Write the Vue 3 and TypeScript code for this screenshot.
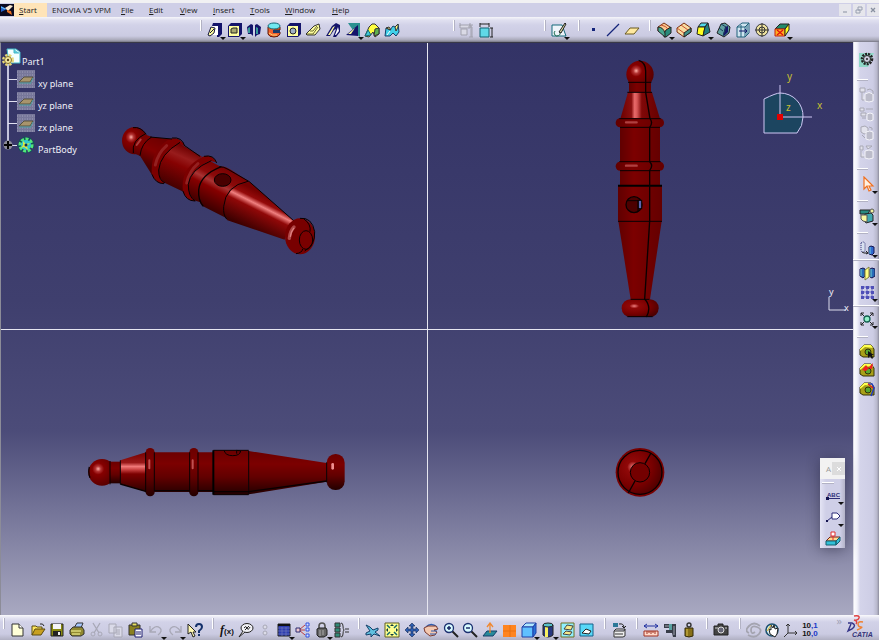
<script setup lang="ts">
interface Tool {
  icon: string
  label: string
  more?: boolean
  off?: boolean
}

interface Group {
  name: string
  tools: Tool[]
}

const t = (icon: string, label: string, flags = ''): Tool => ({
  icon,
  label,
  more: flags.includes('m'),
  off: flags.includes('d'),
})

const menus = ['Start', 'ENOVIA V5 VPM', 'File', 'Edit', 'View', 'Insert', 'Tools', 'Window', 'Help']

const topGroups: Group[] = [
  {
    name: 'features',
    tools: [
      t('pad', 'Pad', 'm'), t('pocket', 'Pocket', 'm'), t('shaft', 'Shaft'), t('groove', 'Groove'),
      t('hole', 'Hole'), t('rib', 'Rib'), t('slot', 'Slot'), t('stiffener', 'Stiffener', 'm'),
      t('loft', 'Multi-sections Solid'), t('unloft', 'Removed Multi-sections Solid'),
    ],
  },
  { name: 'constraints', tools: [t('dialog', 'Constraints in Dialog', 'd'), t('constraint', 'Constraint')] },
  { name: 'sketch', tools: [t('sketch', 'Sketch', 'm')] },
  { name: 'reference', tools: [t('point', 'Point'), t('line', 'Line'), t('plane', 'Plane')] },
  {
    name: 'dressup',
    tools: [
      t('fillet', 'Edge Fillet', 'm'), t('chamfer', 'Chamfer'), t('draft', 'Draft Angle', 'm'), t('shell', 'Shell'),
      t('thickness', 'Thickness'), t('thread', 'Thread'), t('removeface', 'Remove Face', 'm'),
    ],
  },
]

const sideGroups: Group[] = [
  { name: 'workbench', tools: [t('gear', 'Part Design')] },
  {
    name: 'insert',
    tools: [t('body1', 'Body', 'd'), t('body2', 'Geometrical Set', 'd'), t('body3', 'Ordered Set', 'd'), t('body4', 'Assemble', 'd')],
  },
  { name: 'select', tools: [t('cursor', 'Select', 'm')] },
  { name: 'surface', tools: [t('split', 'Split', 'm')] },
  { name: 'transform', tools: [t('translate', 'Translation', 'm')] },
  { name: 'mirror', tools: [t('mirror', 'Mirror'), t('pattern', 'Rectangular Pattern', 'm')] },
  { name: 'scale', tools: [t('scaling', 'Scaling', 'm')] },
  { name: 'analysis', tools: [t('an1', 'Draft Analysis'), t('an2', 'Curvature Analysis'), t('an3', 'Tap Analysis')] },
]

const bottomGroups: Group[] = [
  {
    name: 'standard',
    tools: [
      t('new', 'New'), t('open', 'Open'), t('save', 'Save'), t('print', 'Print'), t('cut', 'Cut', 'd'), t('copy', 'Copy', 'd'),
      t('paste', 'Paste'), t('undo', 'Undo', 'dm'), t('redo', 'Redo', 'dm'), t('help', "What's This?"),
    ],
  },
  {
    name: 'knowledge',
    tools: [
      t('fx', 'Formula'), t('comment', 'Comment'), t('link', 'Link', 'd'), t('table', 'Design Table', 'm'),
      t('relations', 'Relations'), t('lock', 'Lock', 'm'), t('equiv', 'Equivalent Dimensions'),
    ],
  },
  {
    name: 'view',
    tools: [
      t('fly', 'Fly Mode'), t('fit', 'Fit All In'), t('pan', 'Pan'), t('rotate', 'Rotate'), t('zoomin', 'Zoom In'), t('zoomout', 'Zoom Out'),
      t('normal', 'Normal View'), t('multi', 'Multi-View'), t('iso', 'Isometric View', 'm'), t('shade', 'Shading', 'm'),
      t('hide', 'Hide/Show'), t('swap', 'Swap Visible Space'),
    ],
  },
  { name: 'catalog', tools: [t('catalog', 'Catalog Browser')] },
  { name: 'measure', tools: [t('ruler', 'Measure Between'), t('caliper', 'Measure Item'), t('weight', 'Measure Inertia')] },
  { name: 'capture', tools: [t('camera', 'Capture')] },
  { name: 'tools', tools: [t('update', 'Update', 'd'), t('manual', 'Manual Update'), t('axes', 'Axis System'), t('mean', 'Mean Dimensions')] },
]

const planes = ['xy plane', 'yz plane', 'zx plane']
const annotations = [t('abc', 'Text with Leader', 'm'), t('flag', 'Flag Note', 'm'), t('stamp', 'Part Stamp')]
</script>

<template>
  <svg class="sprite" aria-hidden="true">
    <defs>
      <linearGradient id="barrelH" x1="0" x2="1" y1="0" y2="0">
        <stop offset="0" stop-color="#600000" /><stop offset=".35" stop-color="#7c0000" /><stop offset="1" stop-color="#640000" />
      </linearGradient>
      <linearGradient id="coneH" x1="0" x2="1" y1="0" y2="0">
        <stop offset="0" stop-color="#6c0000" /><stop offset=".28" stop-color="#8a1010" /><stop offset=".36" stop-color="#e86a6a" />
        <stop offset=".42" stop-color="#d85858" /><stop offset=".54" stop-color="#800808" /><stop offset="1" stop-color="#660000" />
      </linearGradient>
      <linearGradient id="barrelV" x1="0" x2="0" y1="0" y2="1">
        <stop offset="0" stop-color="#6a0000" /><stop offset=".3" stop-color="#7c0000" /><stop offset=".6" stop-color="#620000" /><stop offset="1" stop-color="#220000" />
      </linearGradient>
      <linearGradient id="coneV" x1="0" x2="0" y1="0" y2="1">
        <stop offset="0" stop-color="#760000" /><stop offset=".26" stop-color="#981818" /><stop offset=".36" stop-color="#f07878" />
        <stop offset=".44" stop-color="#c84040" /><stop offset=".55" stop-color="#7c0000" /><stop offset="1" stop-color="#2c0000" />
      </linearGradient>
      <linearGradient id="tiltHead" gradientUnits="userSpaceOnUse" x1="150" y1="66" x2="110" y2="150">
        <stop offset="0" stop-color="#6c0000" /><stop offset=".5" stop-color="#820000" /><stop offset="1" stop-color="#480000" />
      </linearGradient>
      <linearGradient id="tilt" gradientUnits="userSpaceOnUse" x1="240" y1="100" x2="186" y2="220">
        <stop offset="0" stop-color="#6c0000" /><stop offset=".25" stop-color="#981c1c" /><stop offset=".45" stop-color="#860202" /><stop offset="1" stop-color="#400000" />
      </linearGradient>
      <linearGradient id="tiltBlock" gradientUnits="userSpaceOnUse" x1="370" y1="165" x2="305" y2="290">
        <stop offset="0" stop-color="#740000" /><stop offset=".3" stop-color="#8c0a0a" /><stop offset=".42" stop-color="#a83434" />
        <stop offset=".55" stop-color="#860000" /><stop offset="1" stop-color="#380000" />
      </linearGradient>
      <linearGradient id="tiltCone" gradientUnits="userSpaceOnUse" x1="485" y1="250" x2="435" y2="350">
        <stop offset="0" stop-color="#740000" /><stop offset=".2" stop-color="#940a0a" /><stop offset=".32" stop-color="#f08080" />
        <stop offset=".46" stop-color="#900808" /><stop offset="1" stop-color="#3c0000" />
      </linearGradient>
      <radialGradient id="ball" cx=".36" cy=".37" r=".72">
        <stop offset="0" stop-color="#ffb0a8" /><stop offset=".14" stop-color="#b43434" /><stop offset=".3" stop-color="#860000" /><stop offset="1" stop-color="#520000" />
      </radialGradient>
      <radialGradient id="foot" cx=".34" cy=".38" r=".72">
        <stop offset="0" stop-color="#f08080" /><stop offset=".18" stop-color="#900808" /><stop offset=".6" stop-color="#780000" /><stop offset="1" stop-color="#4c0000" />
      </radialGradient>
    </defs>

    <!-- part features -->
    <symbol id="pad" viewBox="0 0 16 16"><path d="M6 1h9v11l-3 3h-2V4H5z" fill="#14146a" /><path d="M4 4h7v9H4z" fill="#fff" /><path d="M1 13l3-8 4 1-1 5-4 3z" fill="#ffffa0" stroke="#14143a" /><path d="M3 11l4-4" stroke="#14143a" /></symbol>
    <symbol id="pocket" viewBox="0 0 16 16"><path d="M4 1h11v11l-3 3H1V4z" fill="#14146a" /><path d="M2 4h10v10H2z" fill="#ffffa0" /><path d="M4 11V7l2-1h4v5z" fill="#a8a870" stroke="#222" /></symbol>
    <symbol id="shaft" viewBox="0 0 16 16"><path d="M1 5l4-3 2 1v11l-2-2H2zM15 5l-4-3-2 1v12l2-2 3-1z" fill="#14146a" /><path d="M2 6l2-1v6H2zM10 5l2 1v6h-2z" fill="#3a9a9a" /></symbol>
    <symbol id="groove" viewBox="0 0 16 16"><path d="M2 5v7q1 3 6 3t6-3v-2H8V8h6V5z" fill="#f06030" stroke="#5a1a08" /><ellipse cx="8" cy="4" rx="6" ry="3" fill="#70e8f0" stroke="#146a7a" /><path d="M7 8h7v3H7z" fill="#1a3a6a" /><path d="M3 11q3 3 8 2" stroke="#ffe070" fill="none" /></symbol>
    <symbol id="hole" viewBox="0 0 16 16"><path d="M4 1h11v11l-3 3H1V4z" fill="#14146a" /><path d="M2 4h10v10H2z" fill="#ffffa0" /><circle cx="7" cy="9" r="3" fill="#a0b0c8" stroke="#222" /></symbol>
    <symbol id="rib" viewBox="0 0 16 16"><path d="M1 12L9 4l5-2 1 5-5 6H2z" fill="#ffffa0" stroke="#333" /><path d="M2 12h6l5-7M5 9h3l4-5" stroke="#6a6a30" fill="none" /></symbol>
    <symbol id="slot" viewBox="0 0 16 16"><path d="M1 14L7 4l4-3 4 2v7l-4 5H8l3-8-2 1-4 6z" fill="#14146a" /><path d="M3 13l5-8 2-1-5 9z" fill="#ffffa0" /><path d="M10 13l3-8 1 4-3 4z" fill="#fff" /></symbol>
    <symbol id="stiffener" viewBox="0 0 16 16"><path d="M3 1h12v14l-5-4-5-7z" fill="#2a9090" /><path d="M1 13L13 3v11z" fill="#14146a" /><path d="M3 12l7-6-4 6z" fill="#ffffa0" /></symbol>
    <symbol id="loft" viewBox="0 0 16 16"><path d="M1 14l4-9 3-3h3l4 4v6l-4 3-2-5-4 5z" fill="#ffff40" stroke="#333" /><path d="M1 14l3-6 3 5z" fill="#40c8d8" stroke="#146a7a" /><path d="M10 14l1-7 4-1v6z" fill="#60b050" stroke="#333" /></symbol>
    <symbol id="unloft" viewBox="0 0 16 16"><path d="M1 14l1-8 4 2 3-4 2 1 3-3 1 8-3 4-3-3-3 3z" fill="#40d0e8" stroke="#14406a" /><path d="M2 6l3-1 2 3zM11 5l3-3v3l-2 4z" fill="#ffff80" stroke="#333" /><path d="M3 13l3-4" stroke="#fff" /></symbol>
    <symbol id="dialog" viewBox="0 0 16 16"><path d="M1 3h10v3H1zM2 7h6v6H2z" fill="#dadae6" stroke="#a2a2ae" /><path d="M9 5h4v10M12 3v12M10 15h4M10 3h4M1 1v3M11 1v3" stroke="#a2a2ae" fill="none" /></symbol>
    <symbol id="constraint" viewBox="0 0 16 16"><path d="M2 6h9v9H2z" fill="#60d8e8" stroke="#146070" /><path d="M2 1v4M11 1v4M2 2h9M12 6h3M12 15h3M14 6v9" stroke="#222" fill="none" /></symbol>
    <symbol id="sketch" viewBox="0 0 16 16"><path d="M1 3h10l4 11H1z" fill="#eef4fa" stroke="#146a7a" /><path d="M4 9a3 3 0 1 0 5 1" fill="none" stroke="#207050" /><path d="M8 10L14 1l1 1-5 9z" fill="#d8d8a0" stroke="#222" /></symbol>
    <symbol id="point" viewBox="0 0 16 16"><path d="M7 6h3v3H7z" fill="#14247a" /></symbol>
    <symbol id="line" viewBox="0 0 16 16"><path d="M2 14L14 2" stroke="#14247a" stroke-width="1.3" /></symbol>
    <symbol id="plane" viewBox="0 0 16 16"><path d="M1 12l5-6h9l-5 6z" fill="#ffe9a0" stroke="#6a5a20" /></symbol>
    <symbol id="fillet" viewBox="0 0 16 16"><path d="M2 5l6-4 6 4v6l-5 4q0-5-3-6L2 9z" fill="#f8c890" stroke="#7a3010" /><path d="M8 15q0-5 2-7l5-3v6l-5 4z" fill="#2a8a7a" stroke="#222" /><path d="M2 9V5q5 0 7 6v4z" fill="#4aa890" stroke="#222" /><path d="M5 3q5 1 7 4" stroke="#c85030" fill="none" /></symbol>
    <symbol id="chamfer" viewBox="0 0 16 16"><path d="M1 6l7-5 7 5v4l-7 5-7-5z" fill="#f8dca0" stroke="#7a3010" /><path d="M8 11l7-5v4l-7 5z" fill="#40908a" stroke="#222" /><path d="M1 6l7 5M5 3l7 5" stroke="#c85030" /></symbol>
    <symbol id="draft" viewBox="0 0 16 16"><path d="M3 5l3-4h7l-3 4z" fill="#50d8e8" stroke="#222" /><path d="M3 5h7l-2 9-6-2z" fill="#ffff20" stroke="#222" /><path d="M10 5l3-4 2 9-7 4z" fill="#208080" stroke="#222" /></symbol>
    <symbol id="shell" viewBox="0 0 16 16"><path d="M2 11l4-9 4-1 5 4-1 6-5 4z" fill="#60a0a0" stroke="#222" /><path d="M8 13l2-8 3-1v6l-4 4z" fill="#14146a" /><path d="M6 2l5 3-3 9M4 6l4 3" stroke="#1a3a5a" fill="none" /></symbol>
    <symbol id="thickness" viewBox="0 0 16 16"><path d="M2 5l5-4h7v10l-4 4H2z" fill="#cfe4f0" stroke="#20607a" /><path d="M10 5v10M2 5h8l4-4M6 3v12M12 3v10" stroke="#20607a" fill="none" /><path d="M4 9h8m-2-2l2 2-2 2" stroke="#14146a" fill="none" /></symbol>
    <symbol id="thread" viewBox="0 0 16 16"><circle cx="8" cy="8" r="6" fill="#f0e4a0" stroke="#333" /><circle cx="8" cy="8" r="3" fill="none" stroke="#333" /><path d="M8 1v14M1 8h14" stroke="#333" /></symbol>
    <symbol id="removeface" viewBox="0 0 16 16"><path d="M1 7l5-5h9l-4 5z" fill="#208a6a" stroke="#222" /><path d="M1 7h10v7H1z" fill="#ffb020" stroke="#c02010" /><path d="M11 7l4-5v6l-4 6z" fill="#ffff20" stroke="#222" /><path d="M3 8l6 5M9 8l-6 5" stroke="#e01010" stroke-width="1.3" /></symbol>

    <!-- side bar -->
    <symbol id="gear" viewBox="0 0 16 16"><path d="M0 1h15l-6 14H0z" fill="#90d8c8" /><circle cx="8" cy="7" r="5" fill="none" stroke="#222" stroke-width="2.6" stroke-dasharray="2 1" /><circle cx="8" cy="7" r="3.5" fill="#ccd" stroke="#222" /><circle cx="8" cy="7" r="1" fill="#222" /></symbol>
    <symbol id="body1" viewBox="0 0 16 16"><path d="M1 1h5v4H1zM3 5v8h3" fill="#e2e2ec" stroke="#a8a8b4" /><path d="M6 7q4-3 8 0v7q-4 2-8 0z" fill="#bcbcca" stroke="#f4f4fa" /><path d="M8 3l3-1 3 2v3" fill="none" stroke="#a8a8b4" /></symbol>
    <symbol id="body2" viewBox="0 0 16 16"><path d="M1 2h4v3H1zM7 3h7M2 7h5v3H2zM3 12h4" fill="#e2e2ec" stroke="#a8a8b4" /><path d="M8 8q3-2 6 0v6q-3 2-6 0z" fill="#bcbcca" stroke="#f4f4fa" /></symbol>
    <symbol id="body3" viewBox="0 0 16 16"><path d="M2 2l4-1 3 2v5l-4 1-3-2z" fill="#e2e2ec" stroke="#a8a8b4" /><path d="M7 7q4-2 7 0v7q-4 2-7 0z" fill="#bcbcca" stroke="#f4f4fa" /><path d="M10 2l3 1v2M3 10l3 3" stroke="#a8a8b4" fill="none" /></symbol>
    <symbol id="body4" viewBox="0 0 16 16"><path d="M1 2h3v4H1zM2 7v6h4M7 2l2 3 4-3z" fill="#e2e2ec" stroke="#a8a8b4" /><path d="M6 7q4-2 8 0v7q-4 2-8 0z" fill="#bcbcca" stroke="#f4f4fa" /></symbol>
    <symbol id="cursor" viewBox="0 0 16 16"><path d="M5 1v12l3-3 2 5 2-1-2-4h4z" fill="#fff0e0" stroke="#f07020" stroke-width="1.2" /></symbol>
    <symbol id="split" viewBox="0 0 16 16"><path d="M1 2h10l-2 4H1z" fill="#2a8a80" stroke="#222" /><path d="M6 6l6-1 2 2v6l-7 2-2-3z" fill="#40a8b0" stroke="#222" /><path d="M2 7h6v7l-4-1-2-2z" fill="#f8f8a0" stroke="#555" /><circle cx="13" cy="3" r="2" fill="#f4f4a0" stroke="#555" /></symbol>
    <symbol id="translate" viewBox="0 0 16 16"><path d="M2 3q2-2 4 0v8q-2 2-4 0z" fill="#d8e0f0" stroke="#303078" stroke-dasharray="1 1" /><path d="M3 12l2 1h4m-2-2l2 2-2 1" stroke="#222" fill="none" /><path d="M10 7l2-1 3 1v6l-2 2-3-1z" fill="#306ad0" stroke="#141450" /><path d="M11 7v7" stroke="#70d0e0" /></symbol>
    <symbol id="mirror" viewBox="0 0 16 16"><path d="M1 4l3-1 2 1v7l-2 2-3-2zM11 4l2-1 3 1v7l-3 2-2-1z" fill="#286ab8" stroke="#141450" /><path d="M2 4v7M12 4v8" stroke="#70d8d8" /><path d="M6 5l4-3v10l-4 3z" fill="#ffff80" stroke="#808040" /></symbol>
    <symbol id="pattern" viewBox="0 0 16 16"><path d="M3 2v12M8 2v12M13 2v12M2 3h12M2 8h12M2 13h12" stroke="#6868c0" fill="none" /><path d="M2 2h3v3H2zM7 2h3v3H7zM12 2h3v3h-3zM2 7h3v3H2zM7 7h3v3H7zM12 7h3v3h-3zM2 12h3v3H2zM7 12h3v3H7zM12 12h3v3h-3z" fill="#5050b8" /></symbol>
    <symbol id="scaling" viewBox="0 0 16 16"><circle cx="8" cy="8" r="3" fill="#90f0c8" stroke="#146050" stroke-width="1.3" /><path d="M2 5V2h3M11 2h3v3M14 11v3h-3M5 14H2v-3M2 2l3 3M14 2l-3 3M14 14l-3-3M2 14l3-3" stroke="#222" fill="none" /></symbol>
    <symbol id="block" viewBox="0 0 16 16"><path d="M1 6l4-4h7l3 4v8H4l-3-2z" fill="#a8a018" stroke="#333008" /><path d="M1 6l4-4h7l2 3-8-1-5 4z" fill="#ffff50" /><circle cx="9" cy="9" r="3" fill="#58a830" stroke="#333008" /></symbol>
    <symbol id="an1" viewBox="0 0 16 16"><use href="#block" /><path d="M9 8v7l2-2 2 3 1-1-1-3h2z" fill="#111" /></symbol>
    <symbol id="an2" viewBox="0 0 16 16"><use href="#block" /><path d="M3 8l4-5 2 3 5-5-1 6-3-1-3 3z" fill="#f02020" /></symbol>
    <symbol id="an3" viewBox="0 0 16 16"><use href="#block" /><path d="M9 3h4l2 4-3 8" stroke="#2038c0" stroke-width="1.5" fill="none" /><path d="M9 3l5 4" stroke="#e02020" stroke-width="1.5" /></symbol>

    <!-- bottom bar -->
    <symbol id="new" viewBox="0 0 16 16"><path d="M2 2h7l4 4v8H2z" fill="#ffffd8" stroke="#333" /><path d="M9 2v4h4" fill="#fff" stroke="#333" /></symbol>
    <symbol id="open" viewBox="0 0 16 16"><path d="M2 13V4h4l1 1h5v3" fill="#ffe860" stroke="#5a4a10" /><path d="M2 13l3-6h10l-4 6z" fill="#c8a020" stroke="#5a4a10" /><path d="M10 2q3-1 4 2" stroke="#222" fill="none" /></symbol>
    <symbol id="save" viewBox="0 0 16 16"><path d="M2 2h12v12H2z" fill="#8a8a10" stroke="#222" /><path d="M4 2h8v5H4z" fill="#f4f4f8" /><path d="M4 9h8v5H4z" fill="#222" /><path d="M9 10h2v3H9z" fill="#eee" /></symbol>
    <symbol id="print" viewBox="0 0 16 16"><path d="M5 6l3-5h6l-2 5z" fill="#a8c8ff" stroke="#333" /><path d="M1 8l3-3h9l2 3v4l-3 2H3l-2-2z" fill="#908830" stroke="#333" /><path d="M2 9h10M3 12h8" stroke="#ffffa0" /></symbol>
    <symbol id="cut" viewBox="0 0 16 16"><path d="M4 1l6 10M11 1L5 11" stroke="#a8a8b6" stroke-width="1.3" /><circle cx="4" cy="12" r="2" fill="none" stroke="#a8a8b6" /><circle cx="11" cy="12" r="2" fill="none" stroke="#a8a8b6" /></symbol>
    <symbol id="copy" viewBox="0 0 16 16"><path d="M1 2h7v9H1zM6 5h8v10H6zM8 8h4M8 10h4M8 12h4" fill="#dadae8" stroke="#a8a8b6" /></symbol>
    <symbol id="paste" viewBox="0 0 16 16"><path d="M1 3h11v10H1z" fill="#8a8020" stroke="#333" /><path d="M4 1h5v3H4z" fill="#e8e060" stroke="#333" /><path d="M7 7h7v8H7z" fill="#fff" stroke="#1c1c70" /><path d="M8 10h5M8 12h5" stroke="#1c1c70" /></symbol>
    <symbol id="undo" viewBox="0 0 16 16"><path d="M2 4v6h6M2 10q5-8 10-4 3 3-2 7" fill="none" stroke="#a8a8b6" stroke-width="1.3" /></symbol>
    <symbol id="redo" viewBox="0 0 16 16"><path d="M14 4v6H8M14 10Q9 2 4 6q-3 3 2 7" fill="none" stroke="#a8a8b6" stroke-width="1.3" /></symbol>
    <symbol id="help" viewBox="0 0 16 16"><path d="M1 2v10l3-2 2 5 2-1-2-4h3z" fill="#fff8b0" stroke="#222" /><path d="M9 5q0-3 3-3t3 3q0 2-3 4v2" fill="none" stroke="#14306a" stroke-width="2" /><path d="M11 12h2v2h-2z" fill="#14306a" /></symbol>
    <symbol id="comment" viewBox="0 0 16 16"><ellipse cx="9" cy="6" rx="6" ry="4.5" fill="#f0f0f4" stroke="#222" /><path d="M5 9l-4 6 6-5" fill="#fff" stroke="#222" /><path d="M6 6q2-3 3 0t3-1M7 8l4-4" stroke="#222" fill="none" /></symbol>
    <symbol id="link" viewBox="0 0 16 16"><circle cx="8" cy="5" r="2" fill="#dcdce8" stroke="#a8a8b6" /><circle cx="8" cy="11" r="2" fill="#dcdce8" stroke="#a8a8b6" /></symbol>
    <symbol id="table" viewBox="0 0 16 16"><path d="M2 2h12v12H2z" fill="#2c3cb0" stroke="#222" /><path d="M2 6h12M2 9h12M2 12h12M6 5v9M10 5v9" stroke="#7880c0" stroke-width=".6" /><path d="M2 2h12v2H2z" fill="#111" /></symbol>
    <symbol id="relations" viewBox="0 0 16 16"><path d="M4 8l6-5M4 8l6 5M4 8h6" stroke="#c04040" fill="none" /><path d="M1 6h4v4H1z" fill="#f0c8d0" stroke="#2c2c70" /><path d="M11 1h3v3h-3zM11 6h3v3h-3zM11 12h3v3h-3z" fill="#d8e4ff" stroke="#3050e0" /></symbol>
    <symbol id="lock" viewBox="0 0 16 16"><path d="M5 7V4q0-3 3-3t3 3v3" fill="none" stroke="#555" stroke-width="1.6" /><path d="M3 7l2-1h7l1 2v5l-3 2H5l-2-2z" fill="#666" stroke="#222" /><path d="M6 8v6M9 8v5" stroke="#aaa" /></symbol>
    <symbol id="equiv" viewBox="0 0 16 16"><path d="M2 1h5v4H2zM2 6h5v4H2zM2 11h5v4H2z" fill="#308a78" stroke="#333" /><path d="M8 1q2 0 2 3t1 4q-1 1-1 4t-2 3M12 7h4M12 10h4" stroke="#333" fill="none" /></symbol>
    <symbol id="fly" viewBox="0 0 16 16"><path d="M1 3l4 2 3 3 5-2v2l-3 2 5 4-6-2-3 3v-3l-5 1v-2l4-2z" fill="#60c0e0" stroke="#14406a" /></symbol>
    <symbol id="fit" viewBox="0 0 16 16"><path d="M1 1h14v14H1z" fill="#ffff90" stroke="#606020" /><path d="M3 3l3 3M13 3l-3 3M3 13l3-3M13 13l-3-3" stroke="#146a6a" stroke-width="1.5" /><path d="M8 2l2 2H6zM8 14l2-2H6zM2 8l2 2V6zM14 8l-2 2V6z" fill="#103a3a" /></symbol>
    <symbol id="pan" viewBox="0 0 16 16"><path d="M8 1l3 3H9v3h3V5l3 3-3 3V9H9v3h2l-3 3-3-3h2V9H4v2L1 8l3-3v2h3V4H5z" fill="#2c5cb0" stroke="#142850" stroke-width=".6" /></symbol>
    <symbol id="rotate" viewBox="0 0 16 16"><path d="M3 5q5-5 11 0" stroke="#2c5cb0" stroke-width="1.6" fill="none" /><path d="M1 6l4-2h8l2 3-4 1 3 2-2 3-5 1-5-4z" fill="#f4c8b0" stroke="#7a3a30" /><path d="M8 9h6M7 12h6" stroke="#2c5cb0" stroke-width="1.2" fill="none" /></symbol>
    <symbol id="zoomin" viewBox="0 0 16 16"><path d="M9 9l6 6" stroke="#222" stroke-width="2" /><circle cx="6" cy="6" r="4.5" fill="#d8fbff" stroke="#1c3070" stroke-width="1.3" /><path d="M4 6h4M6 4v4" stroke="#142060" stroke-width="1.4" /></symbol>
    <symbol id="zoomout" viewBox="0 0 16 16"><path d="M9 9l6 6" stroke="#222" stroke-width="2" /><circle cx="6" cy="6" r="4.5" fill="#d8fbff" stroke="#1c3070" stroke-width="1.3" /><path d="M4 6h4" stroke="#142060" stroke-width="1.4" /></symbol>
    <symbol id="normal" viewBox="0 0 16 16"><path d="M1 14l4-5h10l-4 5z" fill="#288a9a" stroke="#14406a" /><path d="M8 11V2M5 5l3-4 3 4" stroke="#f08830" stroke-width="1.3" fill="none" /></symbol>
    <symbol id="multi" viewBox="0 0 16 16"><path d="M2 3h13v12H2z" fill="#ff8420" /><path d="M9 3v12M2 9h13" stroke="#e87010" /></symbol>
    <symbol id="iso" viewBox="0 0 16 16"><path d="M1 5l4-4h10l-3 4z" fill="#b0e8ff" stroke="#2040a8" /><path d="M1 5h11v10H1z" fill="#60c0ff" stroke="#2040a8" /><path d="M12 5l3-4v10l-3 4z" fill="#2870d8" stroke="#2040a8" /></symbol>
    <symbol id="shade" viewBox="0 0 16 16"><path d="M3 3v10q2 2 5 2t5-2V3z" fill="#283880" stroke="#222" /><path d="M5 4h3v11H5z" fill="#f8f060" /><ellipse cx="8" cy="3" rx="5" ry="2" fill="#58c0c8" stroke="#222" /></symbol>
    <symbol id="hide" viewBox="0 0 16 16"><path d="M1 1h13v14H1z" fill="#90f0ff" stroke="#707020" /><path d="M4 7l3-4 6 1-2 4zM3 12l3-3 6 1-2 3z" fill="#f4e88a" stroke="#444" /></symbol>
    <symbol id="swap" viewBox="0 0 16 16"><path d="M1 2h13v12H1z" fill="#58d8f8" stroke="#14608a" /><path d="M3 11l4-4 5 2-2 3z" fill="#fff" stroke="#222" /></symbol>
    <symbol id="catalog" viewBox="0 0 16 16"><path d="M3 9l2-2h9v7l-2 1H3zM3 9h10l1-2M4 12h8" fill="#eee" stroke="#333" /><path d="M2 1h5v4H2z" fill="#2c7898" /><path d="M8 2q5-1 5 4m-2-2l2 2 2-2" fill="none" stroke="#222" /></symbol>
    <symbol id="ruler" viewBox="0 0 16 16"><path d="M1 4h14M4 2L1 4l3 2M12 2l3 2-3 2" stroke="#2030a0" fill="none" /><path d="M1 9h14v5H1z" fill="#ffd8c8" stroke="#a03020" /><path d="M4 9v3M6 9v2M8 9v3M10 9v2M12 9v3" stroke="#a03020" /></symbol>
    <symbol id="caliper" viewBox="0 0 16 16"><path d="M2 2h12v13h-3l-1-4H4V8h4V6H2z" fill="#383c48" /><path d="M7 2h3v6H7z" fill="#58a0a0" /><path d="M12 4v9M3 4h4" stroke="#a0a4b0" /></symbol>
    <symbol id="weight" viewBox="0 0 16 16"><circle cx="8" cy="3" r="2" fill="none" stroke="#333" stroke-width="1.4" /><path d="M4 6h8v8q-4 2-8 0z" fill="#887018" stroke="#332a08" /><path d="M6 7v7" stroke="#d8c050" /></symbol>
    <symbol id="camera" viewBox="0 0 16 16"><path d="M1 4h4V2h5v2h5v9H1z" fill="#444" stroke="#222" /><circle cx="8" cy="8" r="3" fill="#667" stroke="#ddd" /><path d="M2 6h3M12 6h2" stroke="#ccc" /></symbol>
    <symbol id="update" viewBox="0 0 16 16"><path d="M14 4Q8-1 3 4t0 7M2 13q7 4 11-1t-2-7-6 3 4 2" stroke="#a4a4b0" stroke-width="1.8" fill="none" /></symbol>
    <symbol id="manual" viewBox="0 0 16 16"><circle cx="7" cy="8" r="6" fill="#d8eef0" stroke="#1c5070" stroke-width="1.6" /><path d="M5 12l-1-5 2 1V3l2 3 1-3 1 4 3-1-1 6-2 3z" fill="#fff" stroke="#222" /><path d="M2 9l4-6" stroke="#e0c030" /></symbol>
    <symbol id="axes" viewBox="0 0 16 16"><path d="M5 11V2M5 11h9M5 11l-4 4M3 4l2-2 2 2M12 9l2 2-2 2" stroke="#333" fill="none" /></symbol>

    <!-- annotations -->
    <symbol id="flag" viewBox="0 0 16 16"><path d="M7 4h5l3 3-3 3H7z" fill="#fff" stroke="#2c2c78" /><path d="M7 8l-5 4" stroke="#2c2c78" /><path d="M1 11h2v2H1z" fill="#141450" /></symbol>
    <symbol id="stamp" viewBox="0 0 16 16"><path d="M1 10l4-4h10l-4 4z" fill="#ffd890" stroke="#7a2010" /><path d="M1 10h10v4H1zM11 10l4-4v4l-4 4z" fill="#30c0d8" stroke="#146070" /><path d="M6 1h4v4H6zM8 5v4" fill="#fff" stroke="#e03030" /></symbol>

    <!-- specification tree -->
    <symbol id="planeNode" viewBox="0 0 18 18"><path d="M0 0h18v18H0z" fill="#77779a" /><path d="M0 2h18M0 5h18M0 8h18M0 11h18M0 14h18M0 17h18" stroke="#a2a2bb" stroke-dasharray="1 1.5" /><path d="M2 12l5-5h9l-3 5z" fill="#a8946c" stroke="#57523e" /><path d="M13 14l3-6M2 13h11" stroke="#50a0a0" fill="none" /></symbol>
    <symbol id="bodyNode" viewBox="0 0 18 18"><circle cx="9" cy="9" r="6.5" fill="none" stroke="#14505a" stroke-width="4" stroke-dasharray="3 1.5" /><circle cx="9" cy="9" r="6" fill="none" stroke="#50e878" stroke-width="3" stroke-dasharray="3 1.5" /><circle cx="9" cy="9" r="5" fill="#30c8d0" /><path d="M6 5l3 3 4-1-3 3 1 4-4-3-3 1 2-3z" fill="#d8e840" /><circle cx="9" cy="9" r="1.5" fill="#14305a" /></symbol>
    <symbol id="partNode" viewBox="0 0 20 20"><path d="M6 1h9l4 3v11H8z" fill="#f4ffff" stroke="#40b8c8" /><path d="M13 1v4h5" fill="#60c8d8" stroke="#40b8c8" /><circle cx="7" cy="12" r="4" fill="none" stroke="#e8d878" stroke-width="4" stroke-dasharray="2 1.2" /><circle cx="7" cy="12" r="3.5" fill="#f4e8a0" stroke="#8a7830" /><circle cx="7" cy="12" r="1.2" fill="#54401c" /></symbol>
    <symbol id="expand" viewBox="0 0 10 10"><circle cx="5" cy="5" r="4.5" fill="#8c8c98" /><path d="M4 1h2v3h3v2H6v3H4V6H1V4h3z" fill="#050505" /></symbol>
  </svg>

  <div class="app">
    <div class="strip"></div>
    <nav class="menubar" aria-label="Main menu">
      <svg class="appicon" viewBox="0 0 14 12" aria-hidden="true">
        <path d="M0 0h14v12H0z" fill="#0a0a20" /><path d="M1 2l6 3-6 3z" fill="#2060c8" /><path d="M5 4l5-3 3 1-5 5z" fill="#f8e8d0" /><path d="M7 6l4 1 1 4-5-3z" fill="#e87020" /><path d="M1 3l4 2" stroke="#70d0ff" />
      </svg>
      <button v-for="(m, i) in menus" :key="m" type="button" class="menu" :class="{ 'menu--active': i === 0 }">
        <template v-if="i === 1">{{ m }}</template>
        <template v-else><u>{{ m[0] }}</u>{{ m.slice(1) }}</template>
      </button>
      <div class="wincontrols">
        <button type="button" aria-label="Minimize"><svg viewBox="0 0 8 8"><path d="M2 6h4" stroke="#8890a0" /></svg></button>
        <button type="button" aria-label="Restore"><svg viewBox="0 0 8 8"><path d="M3 1h4v3H3zM1 4h4v3H1z" fill="none" stroke="#98a0b0" /></svg></button>
        <button type="button" aria-label="Close"><svg viewBox="0 0 8 8"><path d="M2 2l4 4M6 2L2 6" stroke="#8890a0" stroke-width="1.3" /></svg></button>
      </div>
    </nav>

    <div class="bar bar--top" role="toolbar" aria-label="Features">
      <div v-for="g in topGroups" :key="g.name" class="group" :class="'group--' + g.name">
        <button v-for="b in g.tools" :key="b.icon" type="button" class="tool" :class="{ 'tool--more': b.more }" :disabled="b.off" :aria-label="b.label">
          <svg><use :href="'#' + b.icon" /></svg>
        </button>
      </div>
    </div>

    <div class="work">
      <main class="views">
        <section class="view">
          <svg class="scene" viewBox="1 43 426 286" role="img" aria-label="Isometric view">
            <svg x="110" y="115" width="220" height="150" viewBox="0 0 660 450" stroke-linejoin="round">
              <ellipse cx="74" cy="77" rx="38" ry="41" fill="url(#ball)" />
              <path d="M103 57L125 66Q98 90 92 124L70 114Q66 80 103 57z" fill="url(#tiltHead)" />
              <path d="M92 74l-12 16" stroke="#a83c3c" stroke-width="6" stroke-linecap="round" />
              <path d="M122 66L178 72L200 72L150 200L126 180L90 122Q94 88 122 66z" fill="url(#tiltHead)" />
              <path d="M69 38q22-4 40 20M107 56Q64 76 70 114M125 66Q94 84 90 122" class="edge" />
              <path d="M172 76Q205 58 226 94L206 86Q150 120 147 165Q147 195 165 204Q145 210 126 182Q118 112 172 76z" fill="#7c0000" />
              <path d="M170 92q-26 22-34 58" stroke="#942020" stroke-width="9" fill="none" stroke-linecap="round" />
              <path d="M206 84L276 125Q225 160 220 230L165 204Q147 195 147 165Q150 120 206 84z" fill="url(#tilt)" />
              <path d="M210 82Q150 118 146 165Q145 195 165 204M186 69q30-4 38 24M126 178q10 28 36 28" class="edge" />
              <path d="M266 132Q300 108 320 142L300 138Q236 168 234 210Q236 250 256 257Q235 262 219 232Q210 165 266 132z" fill="#7c0000" />
              <path d="M264 146q-26 22-34 58" stroke="#942020" stroke-width="9" fill="none" stroke-linecap="round" />
              <path d="M300 138L332 155Q272 182 266 228L272 262L256 257Q234 245 234 210Q240 165 300 138z" fill="url(#tiltBlock)" />
              <path d="M304 137Q240 164 235 208Q234 246 256 258M282 124q30-6 38 20M219 228q8 30 36 30" class="edge" />
              <path d="M330 155Q345 152 365 166L418 200Q345 220 341 280Q341 300 350 310L276 272Q262 255 266 225Q272 180 330 155z" fill="url(#tiltBlock)" />
              <path d="M418 200L554 320Q530 335 524 374L352 316Q338 300 341 280Q346 215 418 200z" fill="url(#tiltCone)" />
              <path d="M334 155Q270 180 266 225Q264 256 280 274" class="edge edge--bold" />
              <path d="M414 199Q346 212 341 275Q339 300 350 312M328 155q14 0 26 8l64 37 134 118M120 66l66 6M224 92l46 32" class="edge" />
              <ellipse cx="338" cy="195" rx="25" ry="19" fill="#480000" class="edge" />
              <ellipse cx="570" cy="364" rx="45" ry="54" fill="#780000" />
              <path d="M552 336q-12 12-14 34" stroke="#b04848" stroke-width="10" fill="none" stroke-linecap="round" />
              <path d="M551 340q-8 10-10 24" stroke="#e08080" stroke-width="4" fill="none" stroke-linecap="round" />
              <ellipse cx="588" cy="375" rx="20" ry="28" fill="#7a0000" class="edge" />
              <path d="M582 312q22 16 18 38M578 402q-2 12-20 14M570 310q36-4 44 40 2 40-30 58" class="edge" />
            </svg>
          </svg>
          <div class="tree" role="tree">
            <div class="node node--root" role="treeitem"><svg><use href="#partNode" /></svg><span>Part1</span></div>
            <div v-for="p in planes" :key="p" class="node" role="treeitem"><svg><use href="#planeNode" /></svg><span>{{ p }}</span></div>
            <div class="node" role="treeitem">
              <svg><use href="#bodyNode" /></svg><span>PartBody</span>
              <button type="button" class="expander" aria-label="Expand PartBody"><svg><use href="#expand" /></svg></button>
            </div>
          </div>
        </section>

        <section class="view view--right">
          <svg class="scene" viewBox="428 43 425 286" role="img" aria-label="Front view">
            <svg x="600" y="50" width="80" height="280" viewBox="0 0 240 840">
              <circle cx="120" cy="73" r="41" fill="url(#ball)" />
              <path d="M87 97h66v30H87z" fill="url(#barrelH)" />
              <path d="M84 127h72l24 79H61z" fill="url(#coneH)" />
              <path d="M60 230h120v106H60zM60 360h120v46H60z" fill="url(#barrelH)" />
              <rect x="47" y="205" width="145" height="27" rx="13" fill="url(#barrelH)" />
              <rect x="47" y="335" width="145" height="27" rx="13" fill="url(#barrelH)" />
              <path d="M78 217h32M78 347h32" stroke="#b04040" stroke-width="7" stroke-linecap="round" />
              <path d="M54 406h132v108H54z" fill="url(#barrelH)" />
              <path d="M55 514h130l-35 234H92z" fill="url(#barrelH)" />
              <rect x="65" y="748" width="111" height="53" rx="26" fill="url(#foot)" />
              <path d="M84 97h70M82 127h74M58 206h124M60 232h120M58 335h124M60 362h120M54 514h132M92 748h56M82 800h76" class="edge" />
              <path d="M54 407h132" stroke="#000" stroke-width="6" />
              <path d="M116 31q21 6 21 32v64l13 79q10 12-1 26v103q12 12 0 26v152l-15 234q22 24 5 54" class="edge edge--bold" />
              <circle cx="102" cy="464" r="24" fill="#4c0000" class="edge edge--bold" />
              <path d="M82 452h32v34" class="edge" />
              <rect x="115" y="451" width="10" height="25" fill="#5a64b0" class="edge" />
            </svg>
            <path d="M764 99q12-6 16-6a23 23 0 0 1 23 24q0 9-6 16h-33z" fill="#1c4560" stroke="#cfc8f4" />
            <path d="M780 85v32h32" fill="none" stroke="#cfc8f4" />
            <path d="M777 114h6v6h-6z" fill="#e00000" />
            <g class="axis"><text x="787" y="80">y</text><text x="786" y="111">z</text><text x="817" y="109">x</text></g>
            <path d="M829 297v13h17" fill="none" stroke="#dcdcec" />
            <g class="triad"><text x="829" y="295">y</text><text x="844" y="311">x</text></g>
          </svg>
        </section>

        <section class="view view--lower">
          <svg class="scene" viewBox="1 330 426 285" role="img" aria-label="Top view">
            <svg x="80" y="435" width="280" height="70" viewBox="0 0 840 210">
              <ellipse cx="66" cy="112" rx="41" ry="40" fill="url(#ball)" />
              <path d="M90 80h31v65H90z" fill="url(#barrelV)" />
              <path d="M121 76l77-24v118l-77-24z" fill="url(#coneV)" />
              <path d="M223 52h107v119H223zM354 52h46v119h-46zM400 46h106v133H400z" fill="url(#barrelV)" />
              <path d="M506 48l234 36v56l-234 38z" fill="url(#barrelV)" />
              <rect x="197" y="39" width="27" height="145" rx="13" fill="url(#barrelV)" />
              <rect x="328" y="39" width="27" height="145" rx="13" fill="url(#barrelV)" />
              <path d="M208 76v24M338 76v24" stroke="#c05050" stroke-width="6" stroke-linecap="round" />
              <rect x="740" y="57" width="54" height="108" rx="26" fill="url(#barrelV)" />
              <path d="M758 88v12" stroke="#f09090" stroke-width="8" stroke-linecap="round" />
              <path d="M90 78v70M121 76v72M197 52v120M223 52v118M329 52v120M354 52v118M506 48v130M740 82v60" class="edge" />
              <path d="M121 147l76 22M223 167h105M354 167h46M400 170h106l234-32M28 96q-4 18 2 32" class="edge edge--bold" />
              <path d="M400 46v133" stroke="#000" stroke-width="6" />
              <path d="M432 46q4 16 26 16t24-14l-12-2v10M400 46h106M400 179h106" class="edge" />
            </svg>
          </svg>
        </section>

        <section class="view view--right view--lower">
          <svg class="scene" viewBox="428 330 425 285" role="img" aria-label="Side view">
            <svg x="600" y="435" width="80" height="70" viewBox="0 0 240 210">
              <circle cx="120" cy="112" r="73" fill="#780000" />
              <circle cx="120" cy="112" r="66" fill="url(#foot)" class="edge edge--bold" />
              <circle cx="120" cy="112" r="29" fill="#740000" class="edge" />
              <path d="M135 86l18-32M105 138l-20 36" class="edge edge--bold" />
            </svg>
          </svg>
        </section>

        <aside class="palette" aria-label="Annotations">
          <header><span>A</span><button type="button" aria-label="Close palette"><svg viewBox="0 0 8 8"><path d="M2 2l4 4M6 2L2 6" stroke="#fff" /></svg></button></header>
          <div class="palette__body">
            <button v-for="b in annotations" :key="b.icon" type="button" class="tool" :class="{ 'tool--more': b.more }" :aria-label="b.label">
              <span v-if="b.icon === 'abc'" class="abc">ABC</span>
              <svg v-else><use :href="'#' + b.icon" /></svg>
            </button>
          </div>
        </aside>
      </main>

      <div class="side" role="toolbar" aria-label="Workbench">
        <div v-for="g in sideGroups" :key="g.name" class="sgroup" :class="'sgroup--' + g.name">
          <button v-for="b in g.tools" :key="b.icon" type="button" class="tool" :class="{ 'tool--more': b.more }" :disabled="b.off" :aria-label="b.label">
            <svg><use :href="'#' + b.icon" /></svg>
          </button>
        </div>
      </div>
    </div>

    <div class="bar bar--bottom" role="toolbar" aria-label="Standard">
      <div v-for="g in bottomGroups" :key="g.name" class="group">
        <button v-for="b in g.tools" :key="b.icon" type="button" class="tool" :class="{ 'tool--more': b.more }" :disabled="b.off" :aria-label="b.label">
          <span v-if="b.icon === 'fx'" class="fx"><i>f</i>(x)</span>
          <span v-else-if="b.icon === 'mean'" class="mean"><span>10<b>,1</b></span><span>10<b>,0</b></span></span>
          <svg v-else><use :href="'#' + b.icon" /></svg>
        </button>
      </div>
      <div class="brand">
        <span class="overflow">»</span>
        <svg viewBox="0 0 32 24" role="img" aria-label="CATIA">
          <path d="M8 1q6-1 5 2t-5 2q4 1 2 4" fill="none" stroke="#e04040" stroke-width="1.4" />
          <path d="M2 8h4q5 2 0 6l-4 2 3-7" fill="none" stroke="#343488" stroke-width="1.4" />
          <path d="M17 7q-5-1-5 2t3 3-4 3" fill="none" stroke="#f08030" stroke-width="1.4" />
          <text x="6" y="22" class="catia">CATIA</text>
        </svg>
      </div>
    </div>
  </div>
</template>

<style>
body {
  margin: 0;
  overflow: hidden;
}
</style>

<style scoped>
.sprite {
  position: absolute;
  width: 0;
  height: 0;
}
.app {
  display: flex;
  flex-direction: column;
  height: 100vh;
  background: #cfcfe7;
  font-family: 'Open Sans', 'Noto Sans', sans-serif;
}
button {
  padding: 0;
  border: 0;
  background: none;
  font: inherit;
  color: inherit;
}
.strip {
  height: 3px;
  background: #f1f1f3;
}
.menubar {
  display: grid;
  grid-template-columns: 14px 33px 69px 28px 31px 33px 37px 35px 47px 34px 1fr;
  height: 14px;
  font-size: 8px;
  line-height: 14px;
  color: #222;
}
.appicon {
  width: 14px;
  height: 12px;
  margin-top: 1px;
}
.menu {
  padding-left: 5px;
  text-align: left;
  white-space: nowrap;
}
.menu--active {
  background: #ffe4b8;
}
.wincontrols {
  display: flex;
  justify-content: flex-end;
  gap: 2px;
}
.wincontrols button {
  display: grid;
  place-items: center;
  width: 12px;
  height: 12px;
  margin-top: 1px;
  background: #e6e6ec;
}
.wincontrols svg {
  width: 8px;
  height: 8px;
}
.bar {
  display: grid;
  flex: none;
  height: 25px;
  box-sizing: border-box;
}
.bar--top {
  grid-template-columns: 253px 91px 34px 71px 150px;
  padding-left: 200px;
  background: linear-gradient(#f6f6fa, #e0e0f0 3px, #d2d2e8 8px, #cbcbe2 19px, #a8a8b8 23px, #777784);
}
.bar--bottom {
  grid-template-columns: 209px 146px 246px 32px 70px 33px 88px 1fr;
  padding-left: 3px;
  background: linear-gradient(#fafafc, #e4e4f2 3px, #d2d2e8 7px, #cbcbe2 19px, #b0b0c2);
}
.group {
  position: relative;
  display: flex;
  align-items: center;
  justify-content: space-between;
  padding: 1px 9px 0 7px;
}
.bar--bottom .group {
  padding-top: 4px;
}
.group--features {
  padding-right: 53px;
}
.group--constraints {
  padding-left: 6px;
  padding-right: 50px;
}
.group::before {
  content: '';
  position: absolute;
  left: 0;
  top: 3px;
  width: 1px;
  height: 11px;
  background: #fff;
  border-right: 1px solid #b2b2c4;
}
.tool {
  position: relative;
  flex: none;
  width: 16px;
  height: 16px;
}
.tool svg {
  display: block;
  width: 16px;
  height: 16px;
}
.tool--more::after {
  content: '';
  position: absolute;
  right: -3px;
  bottom: -2px;
  border: 3px solid transparent;
  border-top-color: #111;
  border-bottom: 0;
}
.fx,
.mean,
.abc {
  display: block;
  white-space: nowrap;
  color: #111;
}
.fx {
  font: 700 8px/16px 'Liberation Sans', sans-serif;
}
.fx i {
  font: italic 700 12px/16px 'Liberation Serif', serif;
}
.mean {
  font: 700 8px/8px 'Liberation Sans', sans-serif;
}
.mean span {
  display: block;
}
.mean b {
  color: #2038c8;
}
.abc {
  padding-left: 2px;
  font: 700 6px/8px 'Liberation Sans', sans-serif;
  text-decoration: underline;
  color: #2c2c78;
}
.abc::before {
  content: '';
  position: absolute;
  left: 1px;
  top: 10px;
  width: 3px;
  height: 3px;
  background: #141450;
}
.work {
  display: grid;
  grid-template-columns: 1fr 26px;
  flex: 1;
  min-height: 0;
}
.views {
  position: relative;
  display: grid;
  grid-template-columns: 1fr 1fr;
  grid-template-rows: 1fr 1fr;
  min-height: 0;
  border-left: 1px solid #8c8c98;
  border-top: 1px solid #3a3a48;
  background: linear-gradient(#333366, #3f3f6e 45%, #4c4c79 68%, #a9a9c1);
}
.view {
  position: relative;
  min-width: 0;
  min-height: 0;
}
.view--right {
  border-left: 1px solid #e6e6f0;
}
.view--lower {
  border-top: 1px solid #e6e6f0;
}
.scene {
  display: block;
  width: 100%;
  height: 100%;
}
.edge {
  stroke: #0a0000;
  stroke-width: 3;
}
path.edge {
  fill: none;
}
.edge--bold {
  stroke-width: 4;
}
.axis {
  font: 10px 'Noto Sans', sans-serif;
  fill: #c8c030;
}
.triad {
  font: 9px 'Noto Sans', sans-serif;
  fill: #f0f0fa;
}
.tree {
  position: absolute;
  left: 0;
  top: 5px;
  font: 9px/22px 'Noto Sans', sans-serif;
  color: #f0f0f8;
}
.tree::before {
  content: '';
  position: absolute;
  left: 6px;
  top: 16px;
  bottom: 12px;
  width: 2px;
  background: #c4c4dc;
}
.node {
  position: relative;
  display: flex;
  gap: 3px;
  height: 22px;
  padding-left: 16px;
}
.node::before {
  content: '';
  position: absolute;
  left: 7px;
  top: 9px;
  width: 9px;
  height: 1px;
  background: #e0e0f0;
}
.node svg {
  width: 18px;
  height: 18px;
}
.node--root {
  padding-left: 0;
  gap: 1px;
}
.node--root::before {
  display: none;
}
.node--root svg {
  width: 20px;
  height: 20px;
}
.node span {
  padding-top: 3px;
}
.node .expander {
  position: absolute;
  left: 2px;
  top: 4px;
  width: 10px;
  height: 10px;
}
.node .expander svg {
  display: block;
  width: 10px;
  height: 10px;
}
.side {
  display: grid;
  grid-template-rows: 37px 89px 32px 32px 27px 46px 31px auto;
  align-content: start;
  background: linear-gradient(90deg, #b8b8cc, #fcfcfe 1px, #f2f2fa 4px, #d4d4ea 7px, #cdcde5 20px, #b8b8cc 24px, #8c8c9c);
}
.sgroup {
  position: relative;
  display: flex;
  flex-direction: column;
  align-items: center;
  gap: 3px;
  padding: 8px 0 0 2px;
}
.sgroup::before {
  content: '';
  position: absolute;
  left: 4px;
  top: 0;
  width: 11px;
  height: 1px;
  background: #fff;
  border-bottom: 1px solid #b2b2c4;
}
.sgroup--workbench::before {
  display: none;
}
.sgroup--workbench {
  padding-top: 10px;
}
.sgroup--analysis {
  padding-top: 7px;
}
.sgroup--mirror,
.sgroup--scale {
  padding-top: 6px;
}
.sgroup--mirror::before,
.sgroup--scale::before {
  left: 0;
  width: 100%;
}
.palette {
  position: absolute;
  right: 8px;
  bottom: 67px;
  width: 25px;
  box-shadow: 0 2px 14px rgba(20, 20, 40, 0.45);
}
.palette header {
  display: flex;
  align-items: center;
  justify-content: space-between;
  height: 21px;
  padding-left: 6px;
  background: #f2f2f2;
  font-size: 8px;
  color: #9a9a9a;
}
.palette header button {
  display: grid;
  place-items: center;
  width: 13px;
  height: 13px;
  background: #dcdcdc;
}
.palette header svg {
  width: 8px;
  height: 8px;
}
.palette__body {
  position: relative;
  display: flex;
  flex-direction: column;
  align-items: center;
  gap: 6px;
  padding: 8px 0 1px;
  background: linear-gradient(90deg, #e4e4f4, #cfcfe7 6px, #cfcfe7 20px, #b4b4c8);
}
.palette__body::before {
  content: '';
  position: absolute;
  left: 2px;
  top: 3px;
  width: 12px;
  height: 1px;
  background: #fff;
  border-bottom: 1px solid #b2b2c4;
}
.brand {
  display: flex;
  justify-content: flex-end;
  gap: 4px;
  padding-right: 1px;
}
.brand svg {
  width: 32px;
  height: 24px;
}
.catia {
  font: italic 700 7px 'Liberation Sans', sans-serif;
  fill: #343478;
}
.overflow {
  font-size: 11px;
  line-height: 12px;
  color: #a0a0b4;
}
</style>
